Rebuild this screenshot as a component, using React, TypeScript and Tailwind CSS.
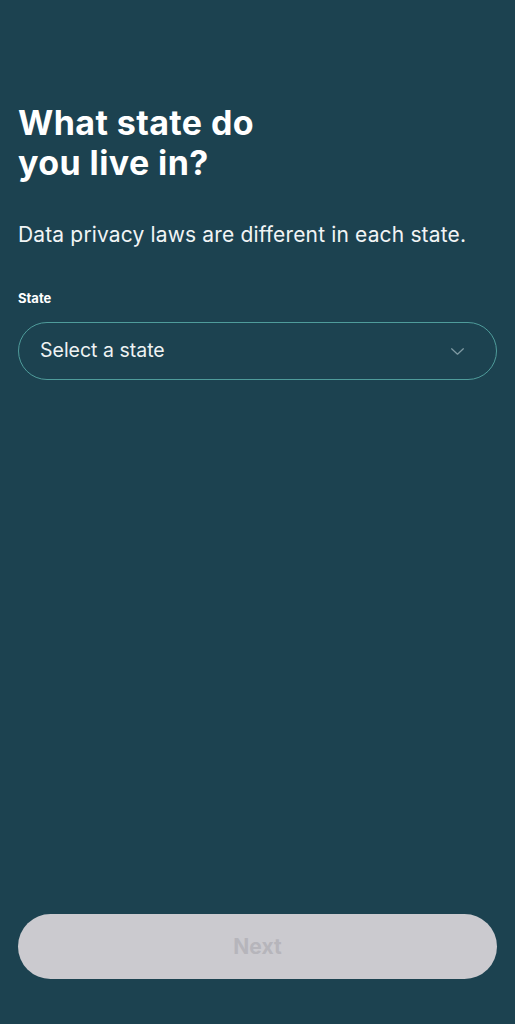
export default function App() {
  return (
    <div className="flex h-[1024px] w-full flex-col bg-[#1c4250] px-[18px] font-['Inter',sans-serif] text-white">
      <h1 className="mt-[103px] text-[34px] font-bold leading-[40px] tracking-[0.4px]">
        What state do
        <br />
        you live in?
      </h1>
      <p className="mt-[38px] text-[21px] leading-[28px] tracking-[0.15px] text-[#f1f4f5]">
        Data privacy laws are different in each state.
      </p>

      {/* State select */}
      <label className="mt-[41px] text-[13px] font-bold leading-[16px]">State</label>
      <button className="mt-[16px] flex h-[58px] w-full items-center justify-between rounded-full border border-[#4f9c9b] pl-[21px] pr-[31px] text-left">
        <span className="text-[19.5px] text-[#eef2f3]">Select a state</span>
        <svg width="15" height="9" viewBox="0 0 16 10" fill="none">
          <path d="M1.5 2l6.5 6 6.5-6" stroke="#7f9aa3" strokeWidth="1.4" strokeLinecap="round" strokeLinejoin="round" />
        </svg>
      </button>

      <div className="flex-1" />

      <button className="mb-[45px] h-[65px] w-full rounded-full bg-[#cbcacf] text-[21px] font-bold text-[#b6b5bb]">
        Next
      </button>
    </div>
  );
}
